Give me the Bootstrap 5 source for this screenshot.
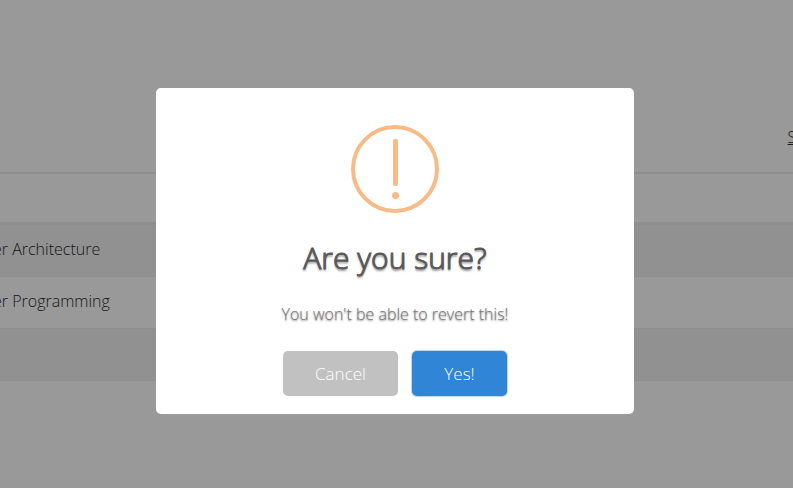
<!DOCTYPE html>
<html lang="en">

<head>
    <meta charset="UTF-8">
    <meta name="viewport" content="width=device-width, initial-scale=1.0">
    <title>Courses</title>
    <link href="https://cdn.jsdelivr.net/npm/bootstrap@5.3.0/dist/css/bootstrap.min.css" rel="stylesheet">
    <style>
        body {
            font-family: "Open Sans", sans-serif;
            font-weight: 300;
            font-size: 16px;
            color: #292b2c;
            background: #fff;
            height: 488px;
            overflow: hidden;
        }

        .page-top {
            height: 172px;
            padding-top: 125px;
            padding-left: 787.6px;
            white-space: nowrap;
        }

        .course-table {
            border-collapse: separate;
            border-spacing: 0;
            border-top: 2px solid #eceeef;
            --bs-table-striped-bg: #f2f2f2;
            --bs-table-striped-color: #292b2c;
            --bs-table-color: #292b2c;
            --bs-table-border-color: #eceeef;
        }

        .course-table > thead th {
            height: 50px;
            padding: 0;
            border-bottom: 2px solid #eceeef;
        }

        .course-table > tbody > tr > td {
            height: 52px;
            padding: 0;
            border-top: 1px solid #eceeef;
            border-bottom: 0;
            vertical-align: middle;
        }

        .course-table > tbody > tr:last-child > td {
            height: 53px;
            border-bottom: 1px solid #eceeef;
        }

        .course-name {
            display: block;
            margin-left: -7px;
            line-height: 24px;
            padding-bottom: 3px;
        }

        .overlay {
            background: rgba(0, 0, 0, .4);
            padding: 88px 0 0 156px;
        }

        .alert-dialog {
            width: 478px;
            height: 325.5px;
            border: 0;
            border-radius: 5px;
            padding-top: 37px;
        }

        .alert-title {
            font-size: 30px;
            font-weight: 300;
            line-height: 40px;
            color: #595959;
            margin: 25px 0 0;
            -webkit-text-stroke: 1px #595959;
            text-shadow: 0 1.5px 2px rgba(0, 0, 0, .5);
        }

        .alert-text {
            font-size: 16px;
            line-height: 24px;
            color: #797979;
            margin: 24px 0 0;
            text-shadow: 0 1px 2px rgba(0, 0, 0, .5);
        }

        .alert-buttons {
            margin-top: 25px;
            gap: 14px;
        }

        .alert-buttons .btn {
            height: 45px;
            padding: 0;
            border: 0;
            border-radius: 5px;
            font-size: 17px;
            font-weight: 300;
            color: #fff;
        }

        .btn-cancel,
        .btn-cancel:hover {
            width: 115px;
            background: #c1c1c1 !important;
        }

        .btn-yes,
        .btn-yes:hover {
            width: 95px;
            background: #3085d6 !important;
            box-shadow: 0 0 1px 1px rgba(48, 133, 214, .35);
        }
    </style>
</head>

<body>
    <div class="page-top"><u>Sort</u></div>

    <table class="table table-striped course-table mb-0">
        <thead>
            <tr>
                <th></th>
            </tr>
        </thead>
        <tbody>
            <tr>
                <td><span class="course-name">er Architecture</span></td>
            </tr>
            <tr>
                <td><span class="course-name">er Programming</span></td>
            </tr>
            <tr>
                <td></td>
            </tr>
        </tbody>
    </table>

    <div class="overlay position-fixed top-0 start-0 w-100 h-100">
        <div class="alert-dialog bg-white d-flex flex-column align-items-center" role="dialog">
            <svg width="88" height="88" viewBox="0 0 88 88" fill="#f8bb86">
                <circle cx="44" cy="44" r="42" fill="none" stroke="#f8bb86" stroke-width="4" />
                <rect x="42" y="14" width="5" height="47" rx="2" />
                <circle cx="44.5" cy="70.5" r="3.5" />
            </svg>
            <h2 class="alert-title">Are you sure?</h2>
            <p class="alert-text">You won't be able to revert this!</p>
            <div class="alert-buttons d-flex">
                <button type="button" class="btn btn-cancel">Cancel</button>
                <button type="button" class="btn btn-yes">Yes!</button>
            </div>
        </div>
    </div>

    <script src="https://cdn.jsdelivr.net/npm/bootstrap@5.3.0/dist/js/bootstrap.bundle.min.js"></script>
</body>

</html>
